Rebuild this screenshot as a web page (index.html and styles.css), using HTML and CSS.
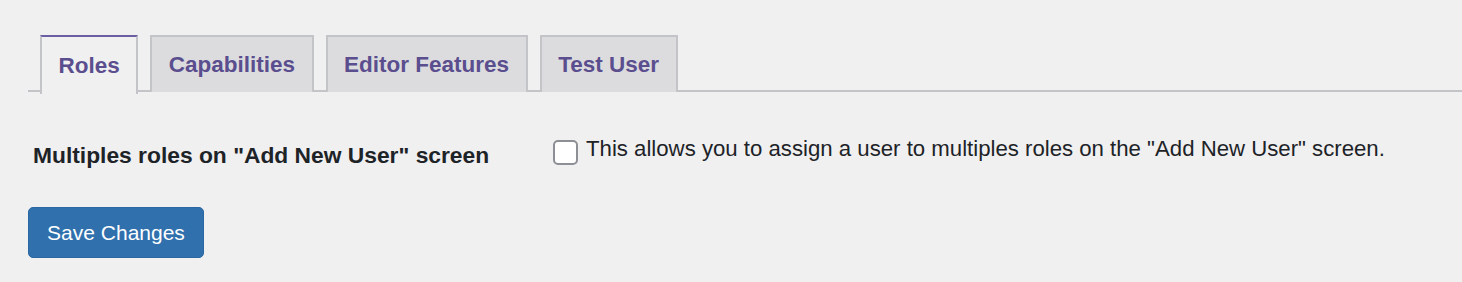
FILE: index.html
```html
<!DOCTYPE html>
<html>
<head>
<meta charset="utf-8">
<link rel="stylesheet" href="styles.css">
</head>
<body>
<div class="wrap">
  <nav class="tabs">
    <a class="tab active">Roles</a>
    <a class="tab">Capabilities</a>
    <a class="tab">Editor Features</a>
    <a class="tab">Test User</a>
  </nav>
  <div class="row">
    <div class="label">Multiples roles on "Add New User" screen</div>
    <label class="field"><span class="checkbox"></span><span class="desc">This allows you to assign a user to multiples roles on the "Add New User" screen.</span></label>
  </div>
  <button class="save">Save Changes</button>
</div>
</body>
</html>
```
FILE: styles.css
```css
html, body {
  margin: 0;
  padding: 0;
  background: #f0f0f1;
  font-family: "Liberation Sans", Arial, sans-serif;
  color: #1d2327;
}
.wrap {
  padding: 35px 0 0 28px;
}
.tabs {
  display: flex;
  gap: 12px;
  padding-left: 12px;
  border-bottom: 2px solid #c3c4c7;
  height: 57px;
  box-sizing: border-box;
}
.tab {
  display: flex;
  align-items: center;
  box-sizing: border-box;
  height: 57px;
  padding: 0 16.5px;
  font-size: 22.5px;
  font-weight: 700;
  color: #5a4e8e;
  background: #dcdcde;
  border: 2px solid #c3c4c7;
  border-bottom: none;
}
.tab.active {
  background: #f0f0f1;
  border-top: 2px solid #6b5ea3;
  height: 59px;
  margin-bottom: -2px;
}
.row {
  display: flex;
  align-items: flex-start;
  padding-top: 41px;
  height: 115px;
  box-sizing: border-box;
}
.label {
  width: 520px;
  padding-left: 5px;
  padding-top: 7px;
  font-size: 22.8px;
  font-weight: 700;
  line-height: 30px;
  color: #1d2327;
}
.field {
  display: flex;
  align-items: flex-start;
  gap: 8px;
}
.checkbox {
  width: 25px;
  height: 25px;
  box-sizing: border-box;
  border: 2px solid #8c8f94;
  border-radius: 5px;
  background: #fff;
  margin-top: 7px;
}
.desc {
  font-size: 22.2px;
  line-height: 30px;
  padding-top: 1px;
  color: #1d2327;
}
.save {
  display: block;
  box-sizing: border-box;
  width: 176px;
  height: 51px;
  background: #2f70ad;
  border: 1px solid #2a68a3;
  border-radius: 5px;
  color: #fff;
  font-family: "Liberation Sans", Arial, sans-serif;
  font-size: 21px;
  padding: 0;
}
```
